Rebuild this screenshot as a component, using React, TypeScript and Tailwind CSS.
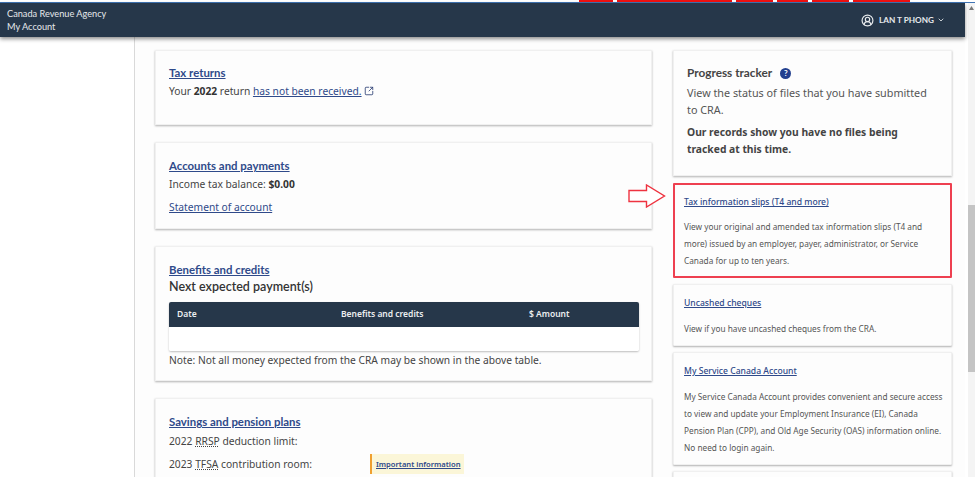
import { ChevronDown, CircleUserRound, SquareArrowOutUpRight } from 'lucide-react';
import type { ReactNode } from 'react';

const body = "font-['Noto_Sans',sans-serif]";
const head = "font-['Lato',sans-serif]";
const cardLine = 'shrink-0 border border-[#f0f0f0] bg-[#fdfdfd] shadow-[0_1px_2px_rgba(0,0,0,0.3)]';
const mainLink = `${head} text-[11.4px] leading-[16px] font-bold text-[#2f4a8a] underline`;
const sideLink = `${body} text-[8.6px] leading-[14px] font-medium text-[#2f4a8a] underline`;

function Redactions() {
  const widths = ['w-[34px]', 'w-[115px]', 'w-[37px]', 'w-[31px]', 'w-[37px]', 'w-[57px]'];
  return (
    <div className="flex h-[3px] shrink-0 border-b border-[#3f74b5] bg-white pl-[579px]">
      <div className="flex h-[2px] gap-[4px]">
        {widths.map((w) => (
          <div key={w} className={`${w} bg-[#ee1111]`} />
        ))}
      </div>
    </div>
  );
}

function SideCard({ title, children }: { title: string; children: ReactNode }) {
  return (
    <section className={`${cardLine} rounded-[1px] pt-[11px] pr-[8px] pb-[8px] pl-[10px]`}>
      <a className={`${sideLink} block`}>{title}</a>
      <p className="mt-[10px] text-[8.25px] leading-[17px] text-[#555]">{children}</p>
    </section>
  );
}

export default function App() {
  return (
    <div className={`${body} flex h-[477px] w-[975px] flex-col overflow-hidden bg-white`}>
      <Redactions />

      <div className="flex min-h-0 flex-1">
        <div className="flex w-[965px] shrink-0 flex-col">
          <header className="relative z-10 flex h-[34px] shrink-0 items-center justify-between bg-[#26374a] pr-[20px] pl-[7px] shadow-[0_2px_4px_rgba(0,0,0,0.45)]">
            <div className={`${head} pt-[1px] text-[9.2px] leading-[12.5px] text-[#e6e9ec]`}>
              <div>Canada Revenue Agency</div>
              <div>My Account</div>
            </div>
            <div className={`${head} flex items-center text-[8.2px] font-bold text-[#e6e9ec]`}>
              <CircleUserRound size={13} strokeWidth={2.2} className="mr-[5px]" />
              <span>LAN T PHONG</span>
              <ChevronDown size={8} strokeWidth={2.5} className="ml-[3px]" />
            </div>
          </header>

          <div className="flex min-h-0 flex-1">
            <aside className="w-[135px] shrink-0 border-r border-[#d9d9d9] bg-white" />

            <main className="flex flex-1 gap-[21px] bg-[#fdfdfd] pt-[13px] pl-[20px]">
              <div className="flex w-[497px] shrink-0 flex-col gap-[17px] text-[10.25px] text-[#444]">
                <section className={`${cardLine} h-[75px] px-[13px] pt-[14px]`}>
                  <a className={`${mainLink} block`}>Tax returns</a>
                  <p className="mt-[2px] flex items-center leading-[16px]">
                    <span className="whitespace-pre">
                      Your <b className="text-[#333]">2022</b> return{' '}
                    </span>
                    <a className="text-[#2f4a8a] underline">has not been received.</a>
                    <SquareArrowOutUpRight size={10} strokeWidth={2} className="ml-[2px] text-[#2b3f73]" />
                  </p>
                </section>

                <section className={`${cardLine} h-[87px] px-[13px] pt-[15px]`}>
                  <a className={`${mainLink} block`}>Accounts and payments</a>
                  <p className="mt-[2px] leading-[16px]">
                    Income tax balance: <b className="text-[#333]">$0.00</b>
                  </p>
                  <a className="mt-[7px] block leading-[16px] text-[#2f4a8a] underline">Statement of account</a>
                </section>

                <section className={`${cardLine} h-[135px] pt-[15px] pr-[12px] pl-[13px]`}>
                  <a className={`${mainLink} block`}>Benefits and credits</a>
                  <h3 className={`${head} mt-[1px] text-[12.5px] leading-[16px] font-semibold text-[#333]`}>
                    Next expected payment(s)
                  </h3>
                  <div className="mt-[7px] overflow-hidden rounded-[2px] shadow-[0_1px_2px_rgba(0,0,0,0.25)]">
                    <div className="grid h-[25px] grid-cols-[164px_188px_1fr] items-center bg-[#26374a] pl-[8px] text-[8.5px] font-semibold text-[#eceef0]">
                      <span>Date</span>
                      <span>Benefits and credits</span>
                      <span>$ Amount</span>
                    </div>
                    <div className="h-[24px] bg-white" />
                  </div>
                  <p className="mt-[1px] leading-[16px]">
                    Note: Not all money expected from the CRA may be shown in the above table.
                  </p>
                </section>

                <section className={`${cardLine} h-[100px] px-[13px] pt-[15px]`}>
                  <a className={`${mainLink} block`}>Savings and pension plans</a>
                  <p className="mt-[3px] leading-[16px]">
                    2022 <span className="underline decoration-dotted">RRSP</span> deduction limit:
                  </p>
                  <div className="mt-[5px] flex items-center leading-[16px]">
                    <span className="w-[201px]">
                      2023 <span className="underline decoration-dotted">TFSA</span> contribution room:
                    </span>
                    <span className="border-l-2 border-[#f0a030] bg-[#fbf6d8] py-[2px] pr-[3px] pl-[4px] text-[7.6px] font-semibold text-[#2f4a8a] underline">
                      Important information
                    </span>
                  </div>
                </section>
              </div>

              <div className="flex w-[279px] shrink-0 flex-col gap-[6px]">
                <section className={`${cardLine} mb-[1px] h-[126px] px-[13px] pt-[14px]`}>
                  <h2 className={`${head} flex items-center text-[11.8px] leading-[16px] font-bold text-[#444]`}>
                    Progress tracker
                    <span className="ml-[8px] flex h-[11px] w-[11px] items-center justify-center rounded-full bg-[#23408f] text-[8px] font-bold text-white">
                      ?
                    </span>
                  </h2>
                  <p className="mt-[3px] text-[10.8px] leading-[17px] text-[#555]">
                    View the status of files that you have submitted to CRA.
                  </p>
                  <p className="mt-[6px] text-[10.3px] leading-[17px] font-bold text-[#444]">
                    Our records show you have no files being tracked at this time.
                  </p>
                </section>

                <section className="relative h-[95px] shrink-0 rounded-[1px] border-2 border-[#ee4050] bg-[#fdfdfd] px-[9px] pt-[10px]">
                  <svg
                    className="absolute top-[-1px] left-[-47px]"
                    width="38"
                    height="24"
                    viewBox="0 0 38 24"
                    fill="#fff"
                    stroke="#ee3340"
                    strokeWidth="1.4"
                  >
                    <path d="M1 6.5H18.5V1L36.5 12L18.5 23V17.5H1Z" />
                  </svg>
                  <a className={`${sideLink} block`}>Tax information slips (T4 and more)</a>
                  <p className="mt-[9px] text-[8.25px] leading-[17px] text-[#555]">
                    View your original and amended tax information slips (T4 and more) issued by an employer, payer,
                    administrator, or Service Canada for up to ten years.
                  </p>
                </section>

                <SideCard title="Uncashed cheques">View if you have uncashed cheques from the CRA.</SideCard>
                <SideCard title="My Service Canada Account">
                  My Service Canada Account provides convenient and secure access to view and update your Employment
                  Insurance (EI), Canada Pension Plan (CPP), and Old Age Security (OAS) information online. No need to
                  login again.
                </SideCard>
                <section className={`${cardLine} h-[30px]`} />
              </div>
            </main>
          </div>
        </div>

        <div className="ml-[3px] flex w-[7px] shrink-0 flex-col items-center bg-[#f4f4f4]">
          <svg className="mt-[3px]" width="5" height="4" viewBox="0 0 5 4" fill="#777">
            <path d="M2.5 0L5 4H0Z" />
          </svg>
          <div className="mt-[195px] h-[167px] w-full bg-[#c4c4c4]" />
        </div>
      </div>
    </div>
  );
}
